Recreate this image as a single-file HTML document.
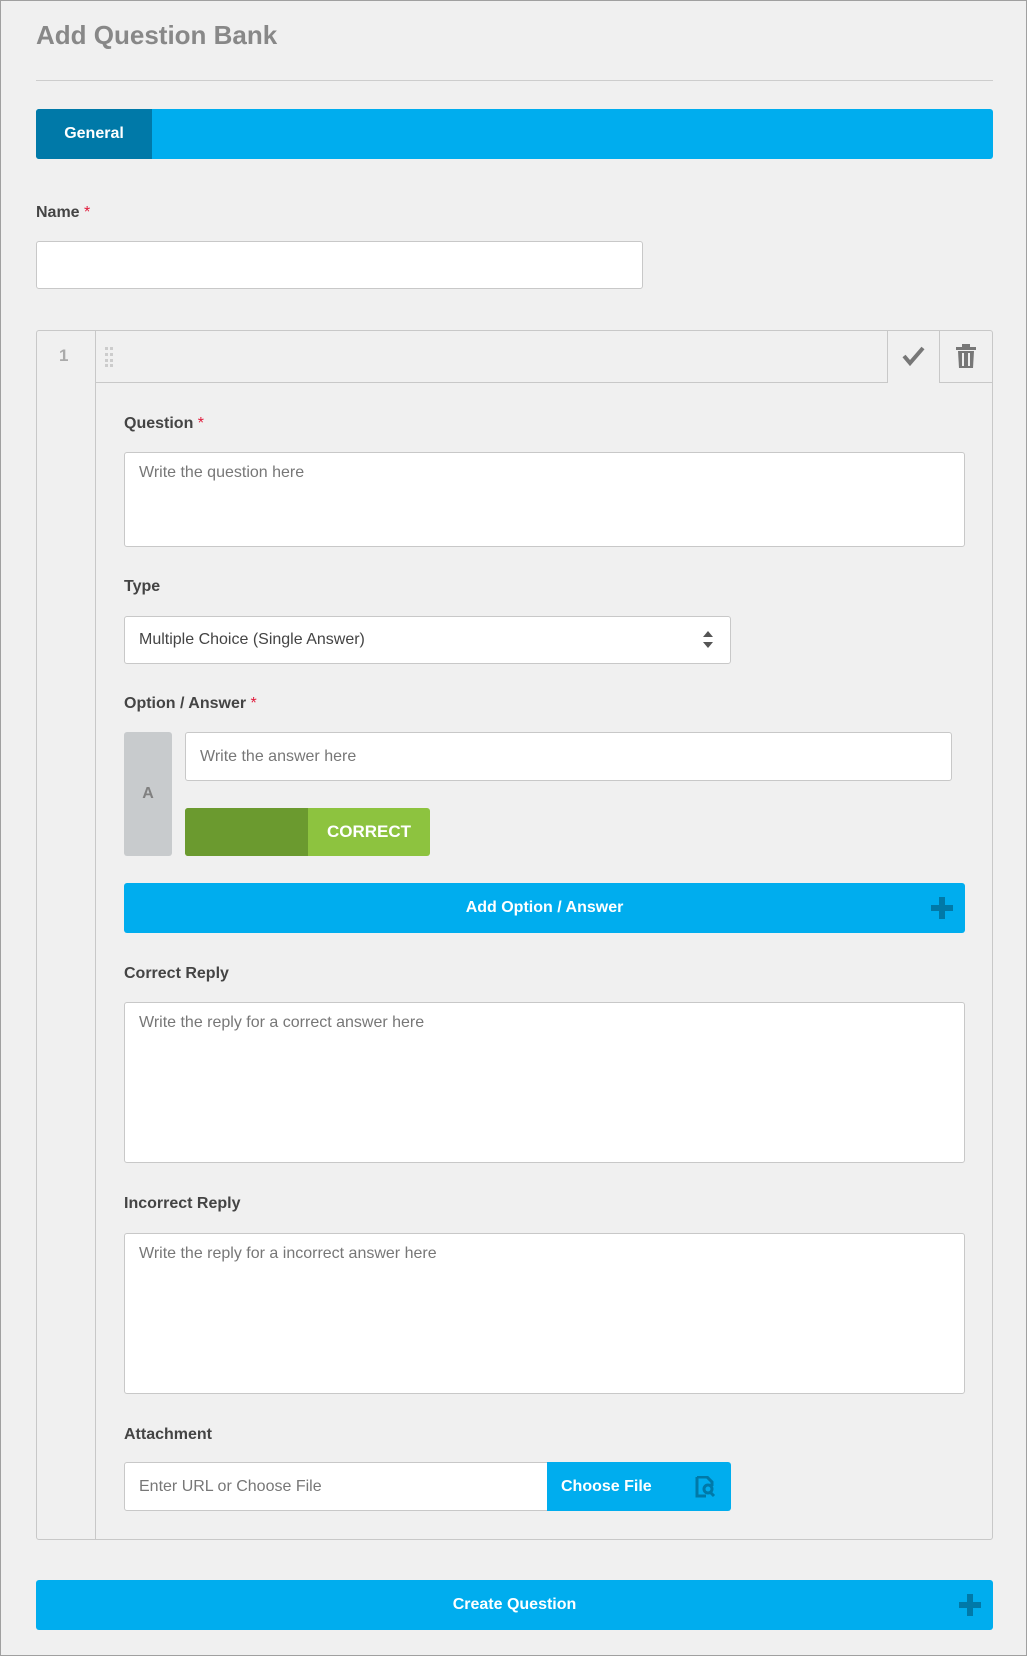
<!DOCTYPE html>
<html><head><meta charset="utf-8"><style>
*{box-sizing:border-box;margin:0;padding:0}
body{width:1027px;height:1656px;background:#f0f0f0;font-family:"Liberation Sans",sans-serif;position:relative;overflow:hidden;border:1px solid #a0a0a0}
.a{position:absolute}
.lbl{position:absolute;left:123px;font-size:16px;font-weight:bold;color:#444}
.star{color:#e0193a;font-weight:normal}
.inp{position:absolute;background:#fff;border:1px solid #c8c8c8;border-radius:3px;font-size:16px;color:#777;padding-left:14px}
.btn{position:absolute;background:#00adee;border-radius:3px;color:#fff;font-weight:bold;font-size:16px;text-align:center}
.plus{position:absolute;right:12px;top:14px;width:22px;height:22px}
.plus:before{content:"";position:absolute;left:8px;top:0;width:6px;height:22px;background:#0079a8}
.plus:after{content:"";position:absolute;left:0;top:8px;width:22px;height:6px;background:#0079a8}
</style></head><body>
<div class="a" style="left:35px;top:19px;font-size:26px;font-weight:bold;color:#888">Add Question Bank</div>
<div class="a" style="left:35px;top:79px;width:957px;height:1px;background:#cdcdcd"></div>
<div class="a" style="left:35px;top:108px;width:957px;height:50px;background:#00adee;border-radius:3px"></div>
<div class="a" style="left:35px;top:108px;width:116px;height:50px;background:#0079a8;border-radius:3px 0 0 3px;color:#fff;font-weight:bold;font-size:16px;line-height:50px;text-align:center">General</div>
<div class="lbl" style="left:35px;top:203px">Name <span class="star">*</span></div>
<div class="inp" style="left:35px;top:240px;width:607px;height:48px"></div>

<div class="a" style="left:35px;top:329px;width:957px;height:1210px;border:1px solid #c8c8c8;border-radius:3px"></div>
<div class="a" style="left:94px;top:330px;width:1px;height:1208px;background:#c8c8c8"></div>
<div class="a" style="left:95px;top:381px;width:791px;height:1px;background:#c8c8c8"></div>
<div class="a" style="left:938px;top:381px;width:53px;height:1px;background:#c8c8c8"></div>
<div class="a" style="left:886px;top:330px;width:1px;height:52px;background:#c8c8c8"></div>
<div class="a" style="left:938px;top:330px;width:1px;height:52px;background:#c8c8c8"></div>
<div class="a" style="left:58px;top:345px;font-size:17px;font-weight:bold;color:#aaa">1</div>
<svg class="a" style="left:104px;top:346px" width="8" height="20"><g fill="#ccc"><rect x="0" y="0" width="3" height="3"/><rect x="5" y="0" width="3" height="3"/><rect x="0" y="6" width="3" height="3"/><rect x="5" y="6" width="3" height="3"/><rect x="0" y="12" width="3" height="3"/><rect x="5" y="12" width="3" height="3"/><rect x="0" y="17" width="3" height="3"/><rect x="5" y="17" width="3" height="3"/></g></svg>
<svg class="a" style="left:901px;top:344px" width="24" height="22"><path d="M2 11l6 7L21 3" fill="none" stroke="#777" stroke-width="4"/></svg>
<svg class="a" style="left:955px;top:343px" width="20" height="24"><g fill="#777"><rect x="0" y="3" width="20" height="3"/><rect x="6" y="0" width="8" height="4"/><path d="M2 7h16l-1 17H3z"/></g><g fill="#f0f0f0"><rect x="6" y="9" width="2" height="13"/><rect x="12" y="9" width="2" height="13"/></g></svg>

<div class="lbl" style="top:414px">Question <span class="star">*</span></div>
<div class="inp" style="left:123px;top:451px;width:841px;height:95px;padding-top:11px">Write the question here</div>
<div class="lbl" style="top:577px">Type</div>
<div class="inp" style="left:123px;top:615px;width:607px;height:48px;line-height:46px;color:#444">Multiple Choice (Single Answer)</div>
<svg class="a" style="left:701px;top:628px" width="12" height="22"><path d="M1 8l5-6 5 6zM1 13l5 6 5-6z" fill="#555"/></svg>
<div class="lbl" style="top:694px">Option / Answer <span class="star">*</span></div>
<div class="a" style="left:123px;top:731px;width:48px;height:124px;background:#c8cbcd;border-radius:3px;color:#808080;font-weight:bold;font-size:16px;line-height:124px;text-align:center">A</div>
<div class="inp" style="left:184px;top:731px;width:767px;height:49px;line-height:47px">Write the answer here</div>
<div class="a" style="left:184px;top:807px;width:245px;height:48px;background:#8dc33f;border-radius:3px"></div>
<div class="a" style="left:184px;top:807px;width:123px;height:48px;background:#6b9a2f;border-radius:3px 0 0 3px"></div>
<div class="a" style="left:307px;top:807px;width:122px;height:48px;color:#fff;font-weight:bold;font-size:17px;line-height:48px;text-align:center">CORRECT</div>
<div class="btn" style="left:123px;top:882px;width:841px;height:50px;line-height:50px">Add Option / Answer<span class="plus"></span></div>
<div class="lbl" style="top:964px">Correct Reply</div>
<div class="inp" style="left:123px;top:1001px;width:841px;height:161px;padding-top:11px">Write the reply for a correct answer here</div>
<div class="lbl" style="top:1194px">Incorrect Reply</div>
<div class="inp" style="left:123px;top:1232px;width:841px;height:161px;padding-top:11px">Write the reply for a incorrect answer here</div>
<div class="lbl" style="top:1425px">Attachment</div>
<div class="inp" style="left:123px;top:1461px;width:426px;height:49px;line-height:47px">Enter URL or Choose File</div>
<div class="btn" style="left:546px;top:1461px;width:184px;height:49px;line-height:49px;text-align:left;padding-left:14px;border-radius:0 3px 3px 0">Choose File</div>
<svg class="a" style="left:694px;top:1475px" width="22" height="22"><path d="M2 1h10l5 5v4M2 1v19h9" fill="none" stroke="#0079a8" stroke-width="3"/><circle cx="13" cy="13" r="4" fill="none" stroke="#0079a8" stroke-width="3"/><path d="M15 16l4 4" stroke="#0079a8" stroke-width="3"/></svg>
<div class="btn" style="left:35px;top:1579px;width:957px;height:50px;line-height:50px">Create Question<span class="plus"></span></div>
</body></html>
